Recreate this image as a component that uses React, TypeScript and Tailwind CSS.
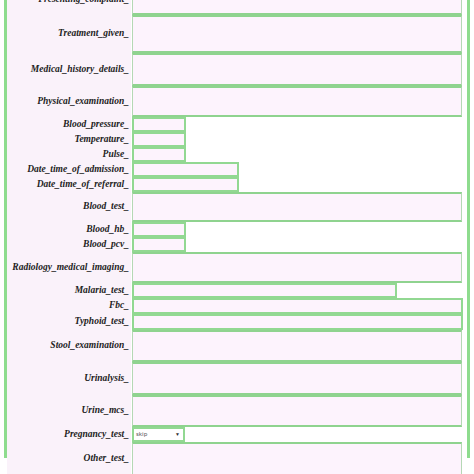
import React from "react";

type Field = {
  label: string;
  h: number;
  kind: "area" | "input" | "select";
  w?: number;
};

const FIELDS: Field[] = [
  { label: "Presenting_complaint_", h: 31, kind: "area" },
  { label: "Treatment_given_", h: 38, kind: "area" },
  { label: "Medical_history_details_", h: 33, kind: "area" },
  { label: "Physical_examination_", h: 31, kind: "area" },
  { label: "Blood_pressure_", h: 15, kind: "input", w: 54 },
  { label: "Temperature_", h: 15, kind: "input", w: 54 },
  { label: "Pulse_", h: 15, kind: "input", w: 54 },
  { label: "Date_time_of_admission_", h: 15, kind: "input", w: 107 },
  { label: "Date_time_of_referral_", h: 15, kind: "input", w: 107 },
  { label: "Blood_test_", h: 30, kind: "area" },
  { label: "Blood_hb_", h: 15, kind: "input", w: 54 },
  { label: "Blood_pcv_", h: 15, kind: "input", w: 54 },
  { label: "Radiology_medical_imaging_", h: 31, kind: "area" },
  { label: "Malaria_test_", h: 15, kind: "input", w: 265 },
  { label: "Fbc_", h: 16, kind: "input", w: 331 },
  { label: "Typhoid_test_", h: 16, kind: "input", w: 331 },
  { label: "Stool_examination_", h: 32, kind: "area" },
  { label: "Urinalysis_", h: 33, kind: "area" },
  { label: "Urine_mcs_", h: 32, kind: "area" },
  { label: "Pregnancy_test_", h: 15, kind: "select", w: 53 },
  { label: "Other_test_", h: 34, kind: "area" },
];

function Control({ f }: { f: Field }) {
  if (f.kind === "area") {
    return (
      <div className="h-full w-[330px] border border-[#b5d8b5] border-y-2 border-y-[#8fd38f] bg-[#fdf3fd]" />
    );
  }
  if (f.kind === "select") {
    return (
      <div
        className="flex h-full items-center justify-between border-2 border-[#92d892] bg-white pl-[2px] pr-[3px] text-[6px] text-[#555]"
        style={{ width: f.w }}
      >
        <span>skip</span>
        <span className="text-[5px] text-[#333]">▼</span>
      </div>
    );
  }
  return (
    <div
      className="h-full border-2 border-[#92d892] bg-[#fdf3fd]"
      style={{ width: f.w }}
    />
  );
}

export default function App() {
  return (
    <div className="h-[474px] w-[474px] overflow-hidden bg-white">
      <div className="ml-[4px] h-full w-[466px] border-x-[3px] border-[#8edc8e]">
        <div className="-mt-[16px] flex flex-col">
          {FIELDS.map((f) => (
            <div key={f.label} className="flex" style={{ height: f.h }}>
              <div className="flex w-[124px] shrink-0 items-center justify-end bg-[#faf2fa] pr-[2px] font-['Liberation_Serif',serif] text-[9.5px] font-bold italic leading-none text-[#222]">
                {f.label}
              </div>
              <div className="flex-1 bg-white pl-[1px]">
                <Control f={f} />
              </div>
            </div>
          ))}
        </div>
      </div>
    </div>
  );
}
